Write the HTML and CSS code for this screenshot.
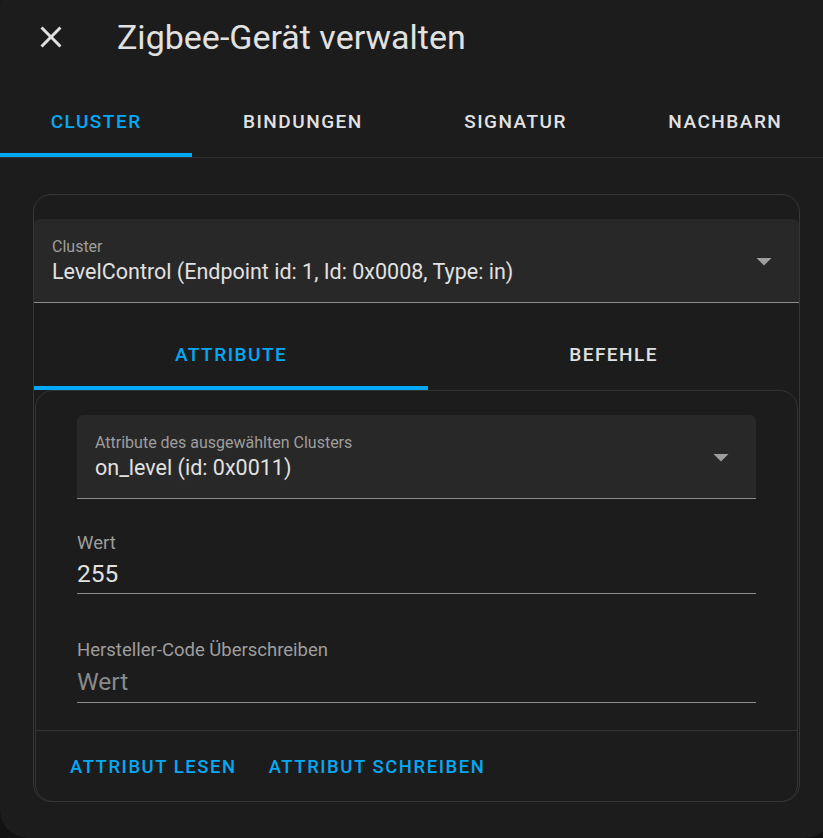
FILE: index.html
```html
<!DOCTYPE html>
<html lang="de">

<head>
    <meta charset="utf-8"/>
    <title>Zigbee-Gerät verwalten</title>
    <link rel="stylesheet" href="styles.css">
</head>

<body>
<div class="dialog">
    <div class="header">
        <span class="close">
            <svg viewBox="0 0 24 24" width="36" height="36"><path fill="currentColor" d="M19,6.41L17.59,5L12,10.59L6.41,5L5,6.41L10.59,12L5,17.59L6.41,19L12,13.41L17.59,19L19,17.59L13.41,12L19,6.41Z"/></svg>
        </span>
        <span class="title">Zigbee-Gerät verwalten</span>
    </div>

    <div class="tabs main-tabs">
        <div class="tab active">Cluster</div>
        <div class="tab">Bindungen</div>
        <div class="tab">Signatur</div>
        <div class="tab">Nachbarn</div>
    </div>

    <div class="content">
        <div class="card">
            <div class="select">
                <div class="select-text">
                    <div class="select-label">Cluster</div>
                    <div class="select-value">LevelControl (Endpoint id: 1, Id: 0x0008, Type: in)</div>
                </div>
                <svg class="arrow" viewBox="0 0 24 24" width="36" height="36"><path fill="currentColor" d="M7,10L12,15L17,10H7Z"/></svg>
            </div>

            <div class="tabs sub-tabs">
                <div class="tab active">Attribute</div>
                <div class="tab">Befehle</div>
            </div>

            <div class="inner-card">
                <div class="inner-body">
                    <div class="select">
                        <div class="select-text">
                            <div class="select-label">Attribute des ausgewählten Clusters</div>
                            <div class="select-value">on_level (id: 0x0011)</div>
                        </div>
                        <svg class="arrow" viewBox="0 0 24 24" width="36" height="36"><path fill="currentColor" d="M7,10L12,15L17,10H7Z"/></svg>
                    </div>

                    <div class="field first">
                        <div class="field-label">Wert</div>
                        <div class="field-value">255</div>
                    </div>

                    <div class="field second">
                        <div class="field-label">Hersteller-Code Überschreiben</div>
                        <div class="field-value placeholder">Wert</div>
                    </div>
                </div>

                <div class="actions">
                    <span class="btn">Attribut lesen</span>
                    <span class="btn">Attribut schreiben</span>
                </div>
            </div>
        </div>
    </div>
</div>
</body>
</html>
```

FILE: styles.css
```css
* {
    padding: 0;
    margin: 0;
    box-sizing: border-box;
}

body {
    background-color: #121212;
    font-family: Roboto, "Noto Sans", sans-serif;
    color: #e1e1e1;
    overflow: hidden;
}

.dialog {
    width: 833px;
    height: 860px;
    margin-top: -22px;
    background-color: #1c1c1c;
    border-radius: 28px;
    overflow: hidden;
}

.header {
    margin-top: 22px;
    height: 74px;
    display: flex;
    align-items: center;
    padding-left: 33px;
}

.close {
    width: 36px;
    height: 36px;
    color: #e1e1e1;
}

.close svg {
    display: block;
}

.title {
    margin-left: 48px;
    font-size: 34px;
    font-weight: 400;
    color: #e1e1e1;
}

.tabs {
    display: flex;
}

.tab {
    flex: 1 1 auto;
    height: 72px;
    display: flex;
    align-items: center;
    justify-content: center;
    font-size: 19px;
    font-weight: 500;
    letter-spacing: 1.5px;
    text-transform: uppercase;
    color: #e1e1e1;
}

.tab.active {
    color: #03a9f4;
    box-shadow: inset 0 -4px 0 #03a9f4;
}

.main-tabs {
    margin-top: 11px;
    border-bottom: 1px solid #2f2f2f;
}

.content {
    padding: 36px 33px 0;
}

.card {
    border: 1px solid #363636;
    border-radius: 18px;
    padding-top: 24px;
    height: 608px;
    overflow: hidden;
}

.select {
    height: 84px;
    background-color: #282828;
    border-radius: 6px 6px 0 0;
    border-bottom: 1px solid #8c8c8c;
    display: flex;
    align-items: center;
    padding: 0 17px 0 18px;
}

.select-text {
    flex: 1;
    padding-top: 2px;
}

.select-label {
    font-size: 16px;
    line-height: 20px;
    color: #9e9e9e;
}

.select-value {
    font-size: 21.5px;
    line-height: 30px;
    color: #e1e1e1;
}

.arrow {
    color: #9e9e9e;
}

.sub-tabs {
    margin-top: 15px;
}

.inner-card {
    margin: 0 1px;
    border: 1px solid #333333;
    border-radius: 18px;
    height: 412px;
}

.inner-body {
    padding: 24px 41px 27px;
    border-bottom: 1px solid #333333;
}

.field {
    border-bottom: 1px solid #8c8c8c;
}

.field.first {
    margin-top: 33px;
    padding-bottom: 4px;
}

.field.second {
    margin-top: 45px;
    padding-bottom: 5px;
}

.field-label {
    font-size: 18.5px;
    line-height: 22px;
    color: #9e9e9e;
}

.field-value {
    margin-top: 5px;
    font-size: 24.5px;
    line-height: 30px;
    color: #e1e1e1;
}

.field-value.placeholder {
    margin-top: 6px;
    color: #8a8a8a;
}

.actions {
    height: 70px;
    display: flex;
    align-items: center;
    padding-left: 22px;
}

.btn {
    padding: 0 12px;
    margin-right: 8px;
    font-size: 18.4px;
    font-weight: 500;
    letter-spacing: 1.6px;
    text-transform: uppercase;
    color: #03a9f4;
}
```
